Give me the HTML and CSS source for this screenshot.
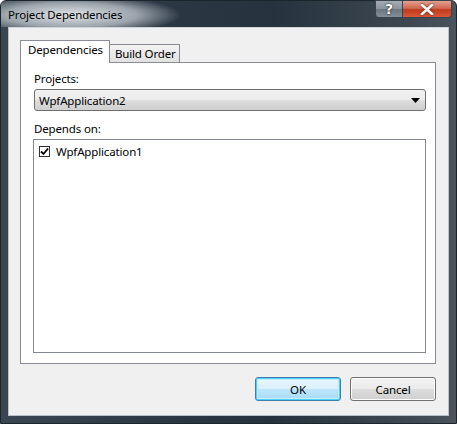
FILE: index.html
```html
<!DOCTYPE html>
<html>
<head>
<meta charset="utf-8">
<link rel="stylesheet" href="styles.css">
</head>
<body>
<div class="window">
  <div class="titlebar">
    <span class="title">Project Dependencies</span>
  </div>
  <div class="caption-buttons">
    <div class="cap help">?</div>
    <div class="cap close">
      <svg width="14" height="11" viewBox="0 0 14 11"><path d="M2 1 L12 10 M12 1 L2 10" stroke="#fff" stroke-width="2.6" stroke-linecap="square"/></svg>
    </div>
  </div>
  <div class="client">
    <div class="tabs">
      <div class="tab active">Dependencies</div>
      <div class="tab">Build Order</div>
    </div>
    <div class="panel">
      <div class="label">Projects:</div>
      <div class="combo">
        <span>WpfApplication2</span>
        <svg class="arrow" width="9" height="5" viewBox="0 0 9 5"><path d="M0 0 H9 L4.5 5 Z" fill="#000"/></svg>
      </div>
      <div class="label depends">Depends on:</div>
      <div class="list">
        <div class="item">
          <span class="check">
            <svg width="9" height="9" viewBox="0 0 9 9"><path d="M1 4.5 L3.5 7 L8 1.5" stroke="#000" stroke-width="1.8" fill="none"/></svg>
          </span>
          <span>WpfApplication1</span>
        </div>
      </div>
    </div>
    <div class="buttons">
      <div class="btn default">OK</div>
      <div class="btn">Cancel</div>
    </div>
  </div>
</div>
</body>
</html>
```
FILE: styles.css
```css
html, body {
  margin: 0;
  padding: 0;
  background: #fff;
}
body {
  font-family: "Noto Sans", "Open Sans", sans-serif;
  font-size: 11.5px;
  letter-spacing: -0.15px;
  color: #000;
}
.window {
  position: relative;
  width: 457px;
  height: 424px;
  box-sizing: border-box;
  padding: 0 7px 7px 7px;
  background: linear-gradient(90deg, #3a4651 0%, #2a3642 40%, #26323d 60%, #3d4852 90%, #4a545d 100%);
  border: 1px solid #1c242c;
  border-radius: 6px 6px 0 0;
  display: flex;
  flex-direction: column;
}
.titlebar {
  height: 26px;
  display: flex;
  align-items: center;
  background: radial-gradient(ellipse 110px 20px at 70px 14px, rgba(235,238,240,0.95) 0%, rgba(200,208,214,0.7) 60%, rgba(90,105,118,0) 100%);
  margin: 0 -7px;
  padding-left: 7px;
}
.title {
  color: #000;
  font-size: 11.5px;
}
.caption-buttons {
  position: absolute;
  top: -1px;
  right: 4px;
  display: flex;
}
.cap {
  height: 18px;
  box-sizing: border-box;
  border: 1px solid #3b444c;
  display: flex;
  align-items: center;
  justify-content: center;
  color: #fff;
  font-weight: bold;
  font-size: 14px;
  font-family: "DejaVu Sans", sans-serif;
}
.help {
  width: 28px;
  border-radius: 0 0 0 4px;
  background: linear-gradient(#a4adb5 0%, #8a949c 50%, #6a767f 51%, #838e96 100%);
  text-shadow: 0 0 2px #222, 0 0 1px #222;
}
.close {
  width: 49px;
  border-left: none;
  border-radius: 0 0 4px 0;
  background: linear-gradient(#e2a08f 0%, #d26a52 45%, #c23a1d 55%, #d9573a 100%);
}
.close svg {
  filter: drop-shadow(0 0 1px #5a1a0c);
}
.client {
  flex: 1;
  background: #f0f0f0;
  border: 1px solid #b9c0c7;
  border-top-color: #cfd5da;
  padding: 12px 11px 13px 11px;
  display: flex;
  flex-direction: column;
}
.tabs {
  display: flex;
  align-items: flex-end;
  height: 22px;
  position: relative;
  z-index: 1;
}
.tab {
  box-sizing: border-box;
  border: 1px solid #898c95;
  border-bottom: none;
  padding: 0 3px 0 5px;
  height: 18px;
  line-height: 17px;
  background: linear-gradient(#f3f3f3, #e1e1e1);
  margin-left: -1px;
}
.tab.active {
  line-height: 18px;
  background: #fff;
  margin-left: 0;
  padding: 0 6px 0 7px;
  margin-bottom: -1px;
  height: 23px;
}
.panel {
  width: 416px;
  height: 302px;
  box-sizing: border-box;
  background: #fff;
  border: 1px solid #898c95;
  padding: 7px 9px 10px 13px;
  display: flex;
  flex-direction: column;
}
.label {
  height: 17px;
  line-height: 17px;
  margin-bottom: 2px;
}
.combo {
  height: 22px;
  box-sizing: border-box;
  border: 1px solid #707070;
  border-radius: 3px;
  background: linear-gradient(#f2f2f2 0%, #ebebeb 50%, #dddddd 51%, #cfcfcf 100%);
  display: flex;
  align-items: center;
  padding: 0 5px 0 4px;
  justify-content: space-between;
}
.depends {
  margin-top: 9px;
  margin-bottom: 2px;
}
.list {
  flex: 1;
  border: 1px solid #828790;
  margin-left: -1px;
  padding: 3px 4px;
}
.item {
  display: flex;
  align-items: center;
  gap: 6px;
  height: 17px;
}
.check {
  width: 11px;
  height: 11px;
  box-sizing: border-box;
  border: 1px solid #333;
  background: #fff;
  display: flex;
  align-items: center;
  justify-content: center;
  margin-left: 1px;
}
.buttons {
  margin-top: 13px;
  display: flex;
  justify-content: flex-end;
  gap: 9px;
  padding-right: 1px;
}
.btn {
  width: 86px;
  height: 24px;
  box-sizing: border-box;
  border: 1px solid #707070;
  border-radius: 3px;
  background: linear-gradient(#f2f2f2 0%, #ebebeb 50%, #dddddd 51%, #cfcfcf 100%);
  display: flex;
  align-items: center;
  justify-content: center;
  box-shadow: inset 0 0 0 1px #fcfcfc;
}
.btn.default {
  border-color: #3c7fb1;
  box-shadow: inset 0 0 0 1px #48d0ff, inset 0 0 0 2px #c8ecfb;
  background: linear-gradient(#eaf6fd 0%, #d9f0fc 50%, #bee6fd 51%, #a7d9f5 100%);
}
```
